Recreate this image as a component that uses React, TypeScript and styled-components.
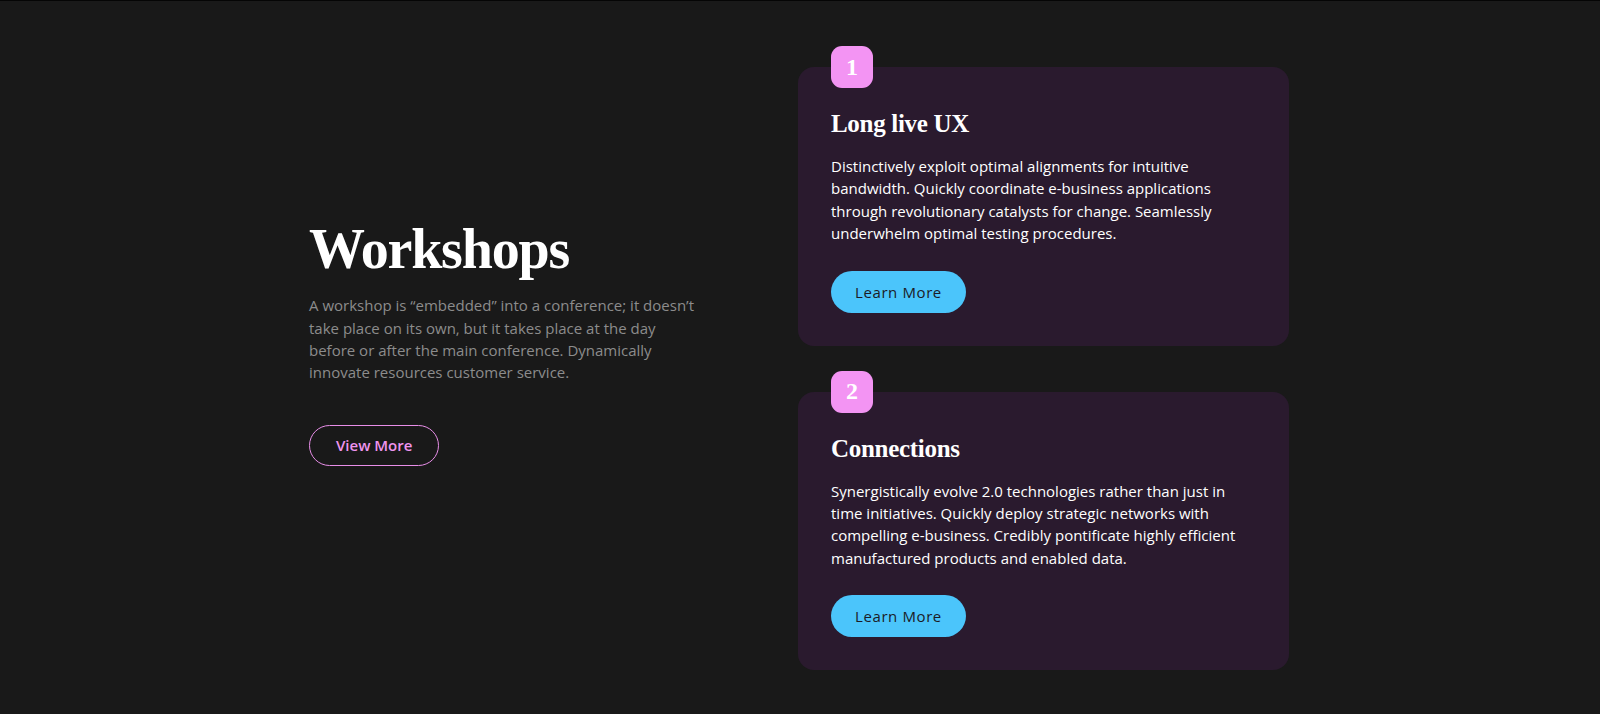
import styled, { createGlobalStyle } from "styled-components";

const GlobalStyle = createGlobalStyle`
  * {
    box-sizing: border-box;
  }

  body {
    margin: 0;
    background: #191919;
    font-family: "Open Sans", "Liberation Sans", sans-serif;
  }
`;

const Section = styled.section`
  border-top: 1px solid #050505;
  padding: 45px 2px 44px 0;
  display: flex;
  justify-content: center;
`;

const Inner = styled.div`
  width: 980px;
  display: grid;
  grid-template-columns: 489px 491px;
  align-items: center;
`;

const Intro = styled.div`
  display: flex;
  flex-direction: column;
  align-items: flex-start;
  padding-bottom: 36px;
`;

const Heading = styled.h2`
  margin: 4px 0 14px;
  font-family: "Liberation Serif", "DejaVu Serif", serif;
  font-size: 56px;
  font-weight: 700;
  line-height: 1.1;
  letter-spacing: -1.2px;
  color: #ffffff;
`;

const Lead = styled.p`
  margin: 0 0 41px;
  max-width: 392px;
  font-size: 15px;
  line-height: 22.4px;
  color: #8c8c8c;
`;

const OutlineButton = styled.button`
  height: 41px;
  padding: 0 26px;
  border: 1px solid #e88ee8;
  border-radius: 999px;
  background: transparent;
  color: #ee94ee;
  font-family: "Open Sans", sans-serif;
  font-size: 15px;
  font-weight: 600;
  cursor: pointer;
`;

const CardList = styled.ul`
  list-style: none;
  margin: 0;
  padding: 21px 0 0;
  display: flex;
  flex-direction: column;
  gap: 46px;
`;

const Card = styled.li`
  position: relative;
  background: #2a1a2e;
  border-radius: 16px;
  padding: 42px 33px 33px;
`;

const Badge = styled.span`
  position: absolute;
  top: -21px;
  left: 33px;
  width: 42px;
  height: 42px;
  border-radius: 11px;
  background: #f394f3;
  color: #ffffff;
  display: flex;
  align-items: center;
  justify-content: center;
  font-family: "Liberation Serif", "DejaVu Serif", serif;
  font-size: 24px;
  font-weight: 700;
`;

const CardTitle = styled.h3`
  margin: 0 0 16px;
  font-family: "Liberation Serif", "DejaVu Serif", serif;
  font-size: 25px;
  font-weight: 700;
  line-height: 30px;
  letter-spacing: -0.3px;
  color: #ffffff;
`;

const CardText = styled.p`
  margin: 0 0 26px;
  font-size: 15px;
  font-weight: 500;
  line-height: 22.4px;
  color: #ffffff;
`;

const FillButton = styled.button`
  height: 42px;
  padding: 0 24px;
  border: none;
  border-radius: 999px;
  background: #4bc5fb;
  color: #1b1b26;
  font-family: "Open Sans", sans-serif;
  font-size: 15px;
  letter-spacing: 0.6px;
  cursor: pointer;
`;

const workshops = [
  {
    title: "Long live UX",
    text: "Distinctively exploit optimal alignments for intuitive bandwidth. Quickly coordinate e-business applications through revolutionary catalysts for change. Seamlessly underwhelm optimal testing procedures.",
  },
  {
    title: "Connections",
    text: "Synergistically evolve 2.0 technologies rather than just in time initiatives. Quickly deploy strategic networks with compelling e-business. Credibly pontificate highly efficient manufactured products and enabled data.",
  },
];

export default function App() {
  return (
    <>
      <GlobalStyle />
      <Section>
        <Inner>
          <Intro>
            <Heading>Workshops</Heading>
            <Lead>
              A workshop is “embedded” into a conference; it doesn’t take place
              on its own, but it takes place at the day before or after the main
              conference. Dynamically innovate resources customer service.
            </Lead>
            <OutlineButton>View More</OutlineButton>
          </Intro>
          <CardList>
            {workshops.map((w, i) => (
              <Card key={w.title}>
                <Badge>{i + 1}</Badge>
                <CardTitle>{w.title}</CardTitle>
                <CardText>{w.text}</CardText>
                <FillButton>Learn More</FillButton>
              </Card>
            ))}
          </CardList>
        </Inner>
      </Section>
    </>
  );
}
